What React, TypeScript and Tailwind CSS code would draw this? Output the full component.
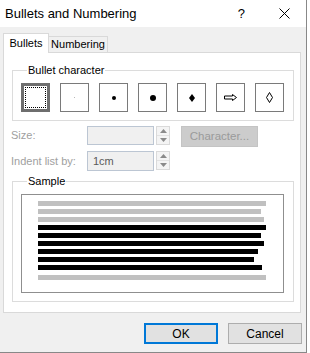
import React from "react";

const font = { fontFamily: '"Liberation Sans", Arial, sans-serif' };

function BulletBox({ selected, children }: { selected?: boolean; children?: React.ReactNode }) {
  if (selected) {
    return (
      <div className="w-[29px] h-[29px] border-[3px] border-[#6e6e6e] bg-white p-px">
        <div className="w-full h-full border border-dotted border-black" />
      </div>
    );
  }
  return (
    <div className="w-[29px] h-[29px] border border-[#7a7a7a] bg-white flex items-center justify-center">
      {children}
    </div>
  );
}

function Spinner() {
  return (
    <div className="w-[14px] h-[19px] ml-[2px] border border-[#dadada] bg-[#f4f4f4] flex flex-col">
      <div className="flex-1 flex items-center justify-center border-b border-[#e2e2e2]">
        <svg width="7" height="4" viewBox="0 0 7 4">
          <path d="M0 4 L3.5 0 L7 4 Z" fill="#8a8a8a" />
        </svg>
      </div>
      <div className="flex-1 flex items-center justify-center">
        <svg width="7" height="4" viewBox="0 0 7 4">
          <path d="M0 0 L3.5 4 L7 0 Z" fill="#8a8a8a" />
        </svg>
      </div>
    </div>
  );
}

const sampleLines: { w: number; c: string }[] = [
  { w: 228, c: "bg-[#c0c0c0]" },
  { w: 223, c: "bg-[#c0c0c0]" },
  { w: 226, c: "bg-[#c0c0c0]" },
  { w: 228, c: "bg-black" },
  { w: 223, c: "bg-black" },
  { w: 226, c: "bg-black" },
  { w: 220, c: "bg-black" },
  { w: 216, c: "bg-black" },
  { w: 224, c: "bg-black" },
];

export default function App() {
  return (
    <div className="w-[310px] h-[353px] bg-white flex" style={font}>
      <div className="w-[307px] h-[353px] border-r border-b border-[#888888] flex flex-col">
        {/* Title bar */}
        <div className="h-[27px] bg-white flex items-center pl-[5px] shrink-0">
          <span className="text-[13px] text-black leading-none">Bullets and Numbering</span>
          <span className="ml-auto text-[13px] text-black leading-none mr-[34px]">?</span>
          <svg width="11" height="11" viewBox="0 0 11 11" className="mr-[16px]">
            <path d="M0.5 0.5 L10.5 10.5 M10.5 0.5 L0.5 10.5" stroke="#000" strokeWidth="1" />
          </svg>
        </div>

        {/* Body */}
        <div className="flex-1 bg-[#f0f0f0] flex flex-col">
          {/* Tabs */}
          <div className="flex items-end pl-[3px] pt-[6px] relative z-10 -mb-px">
            <div className="w-[46px] h-[20px] bg-white border border-b-0 border-[#d9d9d9] flex items-center justify-center text-[11px] text-black">
              Bullets
            </div>
            <div className="w-[59px] h-[16px] bg-[#f0f0f0] border-t border-r border-[#d9d9d9] flex items-center justify-center text-[11px] text-black mb-px">
              Numbering
            </div>
          </div>

          {/* Panel */}
          <div className="ml-[3px] mr-[5px] h-[261px] bg-white border border-[#d9d9d9] flex flex-col">
            <fieldset className="ml-[8px] mr-[6px] mt-[11px] border border-[#dcdcdc] pl-[8px] pt-[6px] pb-[8px]">
              <legend className="ml-[6px] px-px text-[11px] leading-[13px] text-black">Bullet character</legend>
              <div className="flex gap-[10px]">
                <BulletBox selected />
                <BulletBox>
                  <div className="w-px h-px bg-[#b8b8b8]" />
                </BulletBox>
                <BulletBox>
                  <div className="w-[4px] h-[4px] rounded-full bg-black" />
                </BulletBox>
                <BulletBox>
                  <div className="w-[6px] h-[6px] rounded-full bg-black" />
                </BulletBox>
                <BulletBox>
                  <svg width="6" height="8" viewBox="0 0 6 8">
                    <path d="M3 0 L6 4 L3 8 L0 4 Z" fill="#000" />
                  </svg>
                </BulletBox>
                <BulletBox>
                  <svg width="13" height="7" viewBox="0 0 13 7">
                    <path d="M0.5 2 H8.5 V0.5 L12.5 3.5 L8.5 6.5 V5 H0.5 Z" fill="none" stroke="#000" strokeWidth="1" />
                  </svg>
                </BulletBox>
                <BulletBox>
                  <svg width="7" height="11" viewBox="0 0 7 11">
                    <path d="M3.5 0.5 L6.5 5.5 L3.5 10.5 L0.5 5.5 Z" fill="none" stroke="#000" strokeWidth="1" />
                  </svg>
                </BulletBox>
              </div>
            </fieldset>

            {/* Size row */}
            <div className="flex items-start ml-[7px] mt-[5px]">
              <div className="w-[76px] h-[19px] flex items-center text-[11px] text-[#a0a0a0]">Size:</div>
              <div className="w-[67px] h-[19px] bg-[#f0f0f0] border border-[#bcc6d3]" />
              <Spinner />
              <div className="ml-[11px] w-[77px] h-[21px] bg-[#cccccc] border border-[#c4c4c4] flex items-center justify-center text-[11.5px] text-[#9a9a9a]">
                Character...
              </div>
            </div>

            {/* Indent row */}
            <div className="flex items-start ml-[7px] mt-[4px]">
              <div className="w-[76px] h-[20px] flex items-center text-[11px] text-[#a0a0a0]">Indent list by:</div>
              <div className="w-[67px] h-[20px] bg-[#f0f0f0] border border-[#bcc6d3] flex items-center pl-[5px] text-[11px] text-[#5a5a5a]">
                1cm
              </div>
              <Spinner />
            </div>

            {/* Sample */}
            <fieldset className="ml-[8px] mr-[6px] mt-[4px] border border-[#dcdcdc] pl-[8px] pr-[9px] pt-[6px] pb-[8px]">
              <legend className="ml-[6px] px-px text-[11px] leading-[13px] text-black">Sample</legend>
              <div className="h-[99px] border border-[#8f8f8f] bg-white pl-[16px] pt-[6px] flex flex-col gap-[3px]">
                {sampleLines.map((l, i) => (
                  <div key={i} className={`h-[5px] ${l.c}`} style={{ width: l.w }} />
                ))}
                <div className="h-[5px] w-[228px] bg-[#c0c0c0] mt-[2px]" />
              </div>
            </fieldset>
          </div>

          {/* Buttons */}
          <div className="flex justify-end gap-[10px] mt-[10px] mr-[4px]">
            <div className="w-[74px] h-[21px] bg-[#e1e1e1] border-2 border-[#0078d7] flex items-center justify-center text-[12px] text-black">
              OK
            </div>
            <div className="w-[74px] h-[21px] bg-[#e1e1e1] border border-[#adadad] flex items-center justify-center text-[12px] text-black">
              Cancel
            </div>
          </div>
        </div>
      </div>
    </div>
  );
}
